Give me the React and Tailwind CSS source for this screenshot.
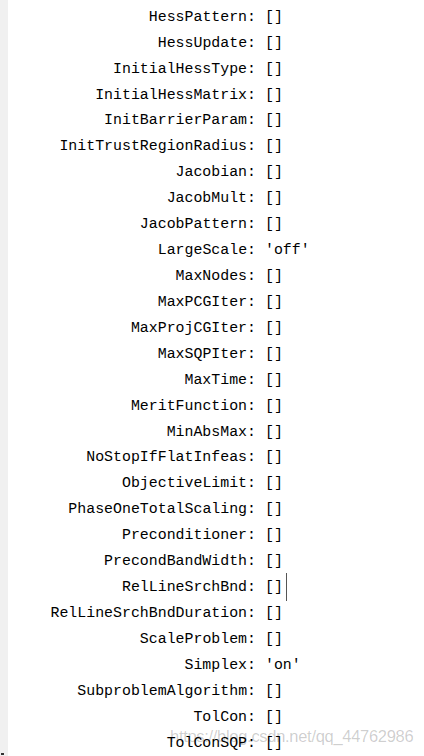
const rows = [
  ['HessPattern', '[]'],
  ['HessUpdate', '[]'],
  ['InitialHessType', '[]'],
  ['InitialHessMatrix', '[]'],
  ['InitBarrierParam', '[]'],
  ['InitTrustRegionRadius', '[]'],
  ['Jacobian', '[]'],
  ['JacobMult', '[]'],
  ['JacobPattern', '[]'],
  ['LargeScale', "'off'"],
  ['MaxNodes', '[]'],
  ['MaxPCGIter', '[]'],
  ['MaxProjCGIter', '[]'],
  ['MaxSQPIter', '[]'],
  ['MaxTime', '[]'],
  ['MeritFunction', '[]'],
  ['MinAbsMax', '[]'],
  ['NoStopIfFlatInfeas', '[]'],
  ['ObjectiveLimit', '[]'],
  ['PhaseOneTotalScaling', '[]'],
  ['Preconditioner', '[]'],
  ['PrecondBandWidth', '[]'],
  ['RelLineSrchBnd', '[]', true],
  ['RelLineSrchBndDuration', '[]'],
  ['ScaleProblem', '[]'],
  ['Simplex', "'on'"],
  ['SubproblemAlgorithm', '[]'],
  ['TolCon', '[]'],
  ['TolConSQP', '[]'],
]

export default function App() {
  return (
    <div className="relative flex h-[756px] w-[424px] overflow-hidden bg-white">
      {/* left gutter */}
      <div className="w-[8px] shrink-0 bg-[#f0f0f0]" />

      <div className="flex flex-col pt-[4px] font-['Liberation_Mono',monospace] text-[14.9px] text-black">
        {rows.map(([key, value, cursor]) => (
          <div key={key} className="flex h-[26px] items-center whitespace-pre">
            <span className="w-[248px] text-right">{key}:</span>
            <span className="ml-[9px]">{value}</span>
            {cursor && <span className="ml-[3px] h-[28px] w-px bg-[#555]" />}
          </div>
        ))}
      </div>

      {/* watermark */}
      <div className="absolute left-[170px] top-[726px] font-['Liberation_Sans',Arial,sans-serif] text-[16.5px] leading-[20px] tracking-[-0.3px] text-black/20">
        https://blog.csdn.net/qq_44762986
      </div>
      <div className="absolute bottom-[1px] left-[1px] h-[2px] w-[3px] bg-[#333]" />
    </div>
  )
}
